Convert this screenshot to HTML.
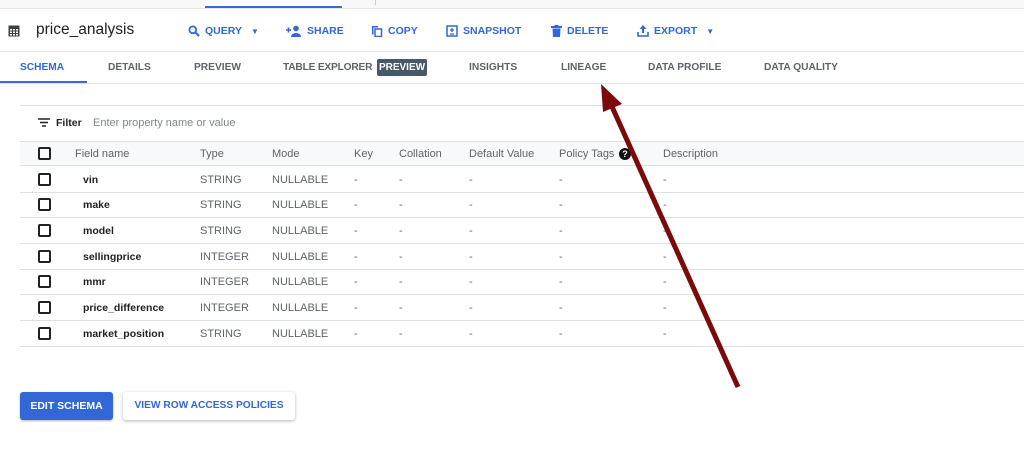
<!DOCTYPE html>
<html><head><style>
*{margin:0;padding:0;box-sizing:border-box}
body{width:1024px;height:472px;background:#fff;font-family:"Liberation Sans",Arial,sans-serif;position:relative;overflow:hidden}
.a{position:absolute;white-space:nowrap}
.btn{font-size:10.5px;font-weight:bold;color:#3367d6;top:25px;display:flex;align-items:center;gap:5px}
.tab{font-size:10.2px;font-weight:bold;color:#5f6368;top:62px}
.hl{position:absolute;left:20px;right:0;height:1px;background:#e0e0e0}
.cb{position:absolute;left:38px;width:13px;height:13px;border:2px solid #202124;border-radius:2px}
.c{position:absolute;font-size:11px;color:#5f6368}
.f{position:absolute;font-size:10.5px;color:#202124;font-weight:bold;left:83px}
.h{position:absolute;font-size:11px;color:#5f6368;top:148px}
</style></head><body>
<div class="a" style="left:0;top:0;width:1024px;height:9px;background:#f8f8f8;border-bottom:1px solid #e6e6e6"></div>
<div class="a" style="left:205px;top:0;width:137px;height:8px;background:#fff;border-bottom:2px solid #3b6ad0"></div>
<div class="a" style="left:375px;top:0;width:1px;height:5px;background:#ccc"></div>
<svg class="a" style="left:8px;top:25px" width="12" height="12" viewBox="0 0 12 12"><rect x="0.5" y="0.5" width="11" height="11" fill="#3c4043"/><g fill="#fff"><rect x="2" y="4" width="2" height="1.5"/><rect x="5" y="4" width="2" height="1.5"/><rect x="8" y="4" width="2" height="1.5"/><rect x="2" y="6.5" width="2" height="1.5"/><rect x="5" y="6.5" width="2" height="1.5"/><rect x="8" y="6.5" width="2" height="1.5"/><rect x="2" y="9" width="2" height="1.5"/><rect x="5" y="9" width="2" height="1.5"/><rect x="8" y="9" width="2" height="1.5"/></g></svg>
<div class="a" style="left:36px;top:21px;font-size:15.5px;color:#202124">price_analysis</div>
<div class="a btn" style="left:188px"><svg width="12" height="12" viewBox="0 0 12 12"><circle cx="4.8" cy="4.8" r="3.4" stroke="#3367d6" stroke-width="1.8" fill="none"/><path d="M7.3 7.3L11 11" stroke="#3367d6" stroke-width="2"/></svg>QUERY <span style="font-size:8px;margin-left:4px">▼</span></div>
<div class="a btn" style="left:286px"><svg width="16" height="12" viewBox="0 0 16 12"><path d="M0 5h5M2.5 2.5v5" stroke="#3367d6" stroke-width="1.6"/><circle cx="10" cy="3.5" r="2.8" fill="#3367d6"/><path d="M5 12c0-3 3-4 5-4s5 1 5 4z" fill="#3367d6"/></svg>SHARE</div>
<div class="a btn" style="left:371px"><svg width="12" height="12" viewBox="0 0 12 12"><path d="M1 1h6v1.5H2.5v7H1z" fill="#3367d6"/><rect x="4" y="4" width="6.5" height="7.5" stroke="#3367d6" stroke-width="1.5" fill="none"/></svg>COPY</div>
<div class="a btn" style="left:446px"><svg width="12" height="12" viewBox="0 0 12 12"><rect x="1" y="1" width="10" height="10" stroke="#3367d6" stroke-width="1.5" fill="none"/><path d="M6 3v4M4 5h4M4 9h4" stroke="#3367d6" stroke-width="1.3"/></svg>SNAPSHOT</div>
<div class="a btn" style="left:551px"><svg width="11" height="12" viewBox="0 0 11 12"><rect x="0" y="1" width="11" height="2" fill="#3367d6"/><path d="M1.5 3.5h8L9 12H2z" fill="#3367d6"/><rect x="3.5" y="0" width="4" height="1.5" fill="#3367d6"/></svg>DELETE</div>
<div class="a btn" style="left:637px"><svg width="12" height="12" viewBox="0 0 12 12"><path d="M6 0L2.5 4H5v4h2V4h2.5z" fill="#3367d6"/><path d="M1 7v4h10V7" stroke="#3367d6" stroke-width="1.6" fill="none"/></svg>EXPORT <span style="font-size:8px;margin-left:4px">▼</span></div>
<div class="a" style="left:0;top:51px;width:1024px;height:1px;background:#e3e3e3"></div>
<div class="a tab" style="left:20px;color:#3367d6">SCHEMA</div>
<div class="a tab" style="left:108px">DETAILS</div>
<div class="a tab" style="left:194px">PREVIEW</div>
<div class="a tab" style="left:283px;letter-spacing:-0.2px">TABLE EXPLORER</div>
<div class="a" style="left:377px;top:59px;width:50px;height:17px;background:#455a64;border-radius:2px;color:#fff;font-size:10px;font-weight:bold;line-height:17px;text-align:center">PREVIEW</div>
<div class="a tab" style="left:469px">INSIGHTS</div>
<div class="a tab" style="left:561px">LINEAGE</div>
<div class="a tab" style="left:648px">DATA PROFILE</div>
<div class="a tab" style="left:764px">DATA QUALITY</div>
<div class="a" style="left:0;top:81px;width:87px;height:2px;background:#3b6ad0"></div>
<div class="a" style="left:0;top:83px;width:1024px;height:1px;background:#e3e3e3"></div>
<div class="hl" style="top:105px"></div>
<svg class="a" style="left:38px;top:118px" width="12" height="9" viewBox="0 0 12 9"><path d="M0 1h12M2 4.5h8M4 8h4" stroke="#202124" stroke-width="1.5"/></svg>
<div class="a" style="left:56px;top:117px;font-size:10.5px;font-weight:bold;color:#202124">Filter</div>
<div class="a" style="left:93px;top:117px;font-size:11px;color:#80868b">Enter property name or value</div>
<div class="a" style="left:20px;top:141px;width:1004px;height:25px;background:#f8f9fa;border-top:1px solid #e0e0e0;border-bottom:1px solid #e0e0e0"></div>
<div class="cb" style="top:147px"></div>
<div class="h" style="left:75px">Field name</div>
<div class="h" style="left:200px">Type</div>
<div class="h" style="left:272px">Mode</div>
<div class="h" style="left:354px">Key</div>
<div class="h" style="left:399px">Collation</div>
<div class="h" style="left:469px">Default Value</div>
<div class="h" style="left:559px">Policy Tags</div>
<div class="a" style="left:619px;top:148px;width:12px;height:12px;border-radius:50%;background:#111;color:#fff;font-size:9px;font-weight:bold;text-align:center;line-height:12px">?</div>
<div class="h" style="left:663px">Description</div>

<div class="cb" style="top:173px"></div><div class="f" style="top:174px">vin</div><div class="c" style="left:200px;top:174px">STRING</div><div class="c" style="left:272px;top:174px">NULLABLE</div><div class="c" style="left:354px;top:174px">-</div><div class="c" style="left:399px;top:174px">-</div><div class="c" style="left:469px;top:174px">-</div><div class="c" style="left:559px;top:174px">-</div><div class="c" style="left:663px;top:174px">-</div><div class="hl" style="top:192px"></div>
<div class="cb" style="top:198px"></div><div class="f" style="top:199px">make</div><div class="c" style="left:200px;top:199px">STRING</div><div class="c" style="left:272px;top:199px">NULLABLE</div><div class="c" style="left:354px;top:199px">-</div><div class="c" style="left:399px;top:199px">-</div><div class="c" style="left:469px;top:199px">-</div><div class="c" style="left:559px;top:199px">-</div><div class="c" style="left:663px;top:199px">-</div><div class="hl" style="top:217px"></div>
<div class="cb" style="top:224px"></div><div class="f" style="top:225px">model</div><div class="c" style="left:200px;top:225px">STRING</div><div class="c" style="left:272px;top:225px">NULLABLE</div><div class="c" style="left:354px;top:225px">-</div><div class="c" style="left:399px;top:225px">-</div><div class="c" style="left:469px;top:225px">-</div><div class="c" style="left:559px;top:225px">-</div><div class="c" style="left:663px;top:225px">-</div><div class="hl" style="top:243px"></div>
<div class="cb" style="top:250px"></div><div class="f" style="top:251px">sellingprice</div><div class="c" style="left:200px;top:251px">INTEGER</div><div class="c" style="left:272px;top:251px">NULLABLE</div><div class="c" style="left:354px;top:251px">-</div><div class="c" style="left:399px;top:251px">-</div><div class="c" style="left:469px;top:251px">-</div><div class="c" style="left:559px;top:251px">-</div><div class="c" style="left:663px;top:251px">-</div><div class="hl" style="top:269px"></div>
<div class="cb" style="top:275px"></div><div class="f" style="top:276px">mmr</div><div class="c" style="left:200px;top:276px">INTEGER</div><div class="c" style="left:272px;top:276px">NULLABLE</div><div class="c" style="left:354px;top:276px">-</div><div class="c" style="left:399px;top:276px">-</div><div class="c" style="left:469px;top:276px">-</div><div class="c" style="left:559px;top:276px">-</div><div class="c" style="left:663px;top:276px">-</div><div class="hl" style="top:294px"></div>
<div class="cb" style="top:301px"></div><div class="f" style="top:302px">price_difference</div><div class="c" style="left:200px;top:302px">INTEGER</div><div class="c" style="left:272px;top:302px">NULLABLE</div><div class="c" style="left:354px;top:302px">-</div><div class="c" style="left:399px;top:302px">-</div><div class="c" style="left:469px;top:302px">-</div><div class="c" style="left:559px;top:302px">-</div><div class="c" style="left:663px;top:302px">-</div><div class="hl" style="top:320px"></div>
<div class="cb" style="top:327px"></div><div class="f" style="top:328px">market_position</div><div class="c" style="left:200px;top:328px">STRING</div><div class="c" style="left:272px;top:328px">NULLABLE</div><div class="c" style="left:354px;top:328px">-</div><div class="c" style="left:399px;top:328px">-</div><div class="c" style="left:469px;top:328px">-</div><div class="c" style="left:559px;top:328px">-</div><div class="c" style="left:663px;top:328px">-</div><div class="hl" style="top:346px"></div>

<div class="a" style="left:20px;top:392px;width:93px;height:28px;background:#3367d6;border-radius:3px;color:#fff;font-size:10.5px;font-weight:bold;line-height:28px;text-align:center;box-shadow:0 1px 2px rgba(0,0,0,.3)">EDIT SCHEMA</div>
<div class="a" style="left:123px;top:392px;width:172px;height:28px;background:#fff;border-radius:3px;color:#3367d6;font-size:10.2px;font-weight:bold;line-height:28px;text-align:center;box-shadow:0 1px 3px rgba(0,0,0,.3)">VIEW ROW ACCESS POLICIES</div>

<svg class="a" style="left:0;top:0" width="1024" height="472"><line x1="738" y1="387" x2="609" y2="100" stroke="#7b0a0a" stroke-width="5"/><path d="M601 84L622 104L603 112Z" fill="#7b0a0a"/></svg>
</body></html>
